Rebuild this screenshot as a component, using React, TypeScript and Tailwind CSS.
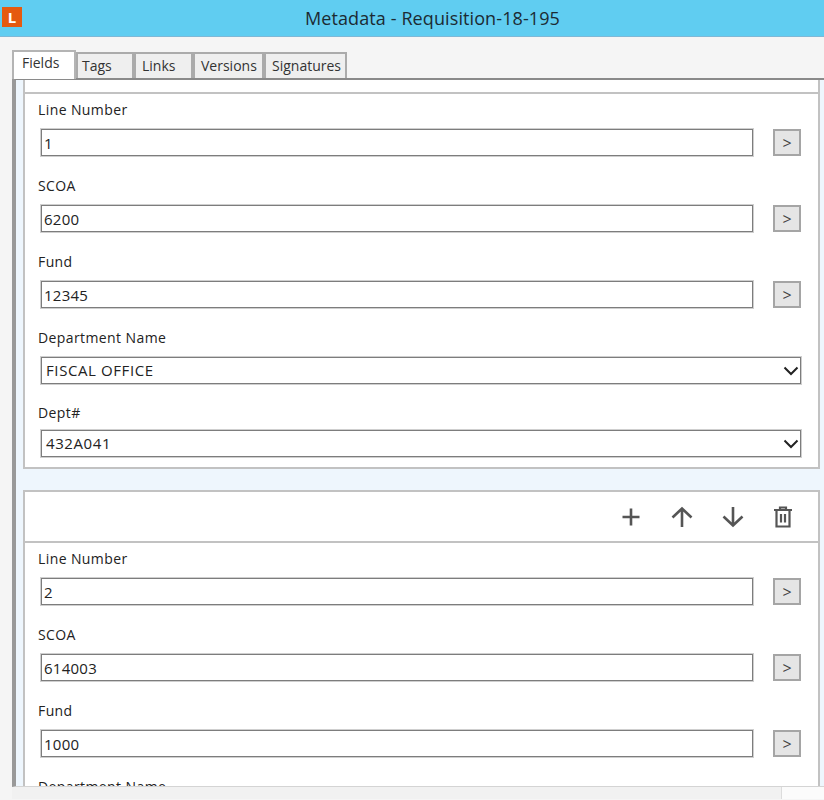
const font = "font-['Open_Sans',sans-serif]";

const tabs = [
  { name: "Tags", cls: "w-[58px] pl-[4px]" },
  { name: "Links", cls: "w-[59px] pl-[6px]" },
  { name: "Versions", cls: "w-[71px] pl-[6px]" },
  { name: "Signatures", cls: "w-[83px] pl-[6px]" },
];

const inputBox = "h-[27px] border border-[#7d7d7d] ring-1 ring-[#cfcfcf] bg-white";

const Label = ({ text, mb }: { text: string; mb: string }) => (
  <div className={`h-5 ${mb} pl-[13px] text-[14px] leading-5 tracking-[0.4px] text-[#222]`}>{text}</div>
);

const TextField = ({ label, value }: { label: string; value: string }) => (
  <div className="mb-[20px]">
    <Label text={label} mb="mb-[9px]" />
    <div className="flex items-center pl-[16px] pr-[17px]">
      <div className={`flex-1 ${inputBox} pl-[2px] text-[15px] leading-[26px] tracking-[0.25px] text-[#222]`}>
        {value}
      </div>
      <button className="ml-5 w-[28px] h-[27px] border-2 border-[#a5a5a5] bg-[#e5e5e5] text-[16px] leading-[20px] text-[#444]">
        &gt;
      </button>
    </div>
  </div>
);

const SelectField = ({ label, value, labelMb, mb }: { label: string; value: string; labelMb: string; mb: string }) => (
  <div className={mb}>
    <Label text={label} mb={labelMb} />
    <div className={`ml-[16px] mr-[17px] ${inputBox} pl-[4px] pr-[1px] flex items-center justify-between text-[15px] tracking-[0.6px] text-[#222]`}>
      <span>{value}</span>
      <svg width="16" height="10" viewBox="0 0 16 10" fill="none" stroke="#222" strokeWidth="2">
        <path d="M1.500 1.500 8 8l6.500-6.500" />
      </svg>
    </div>
  </div>
);

const TrashIcon = () => (
  <svg width="20" height="22" viewBox="0 0 20 22" fill="none" stroke="#555" strokeWidth="2.200">
    <path d="M1 4h18M7 4V1.500h6V4M3.500 4v16.500h13V4" />
    <path d="M8 8v8.500M12 8v8.500" />
  </svg>
);

const Toolbar = () => (
  <div className="h-[51px] flex items-center justify-end gap-[29px] pr-[25px] border-b-2 border-[#c2c2c2]">
    <svg width="22" height="22" viewBox="0 0 22 22" fill="none" stroke="#555" strokeWidth="2.600">
      <path d="M11 2.500v17M2.500 11h17" />
    </svg>
    <svg width="22" height="22" viewBox="0 0 22 22" fill="none" stroke="#555" strokeWidth="2.600">
      <path d="M11 21V2.500M1.500 11.500 11 2.500l9.500 9" />
    </svg>
    <svg width="22" height="22" viewBox="0 0 22 22" fill="none" stroke="#555" strokeWidth="2.600">
      <path d="M11 1v18.500M1.500 10.500 11 19.500l9.500-9" />
    </svg>
    <TrashIcon />
  </div>
);

export default function App() {
  return (
    <div className={`w-[824px] h-[800px] overflow-hidden flex flex-col bg-[#f5f5f5] ${font}`}>
      <div className="relative h-[37px] shrink-0 bg-[#60cdf1] border-b border-[#7fb8d6] flex items-center justify-center pl-[41px] text-[18px] tracking-[0.1px] text-[#1c2b33]">
        <div className="absolute left-[2px] top-[7px] w-[20px] h-[20px] bg-[#e55a10] text-white text-[15px] leading-[20px] font-bold text-center">
          L
        </div>
        Metadata - Requisition-18-195
      </div>

      <div className="h-[41px] shrink-0 pl-[12px] flex items-end text-[14px] text-[#333]">
        <div className="w-[64px] h-[29px] -mb-[1px] relative border-2 border-b-0 border-[#b4b4b4] bg-white pl-[8px] leading-[22px]">
          Fields
        </div>
        {tabs.map((t) => (
          <div
            key={t.name}
            className={`${t.cls} h-[26px] border-2 border-b-0 border-[#ababab] bg-[#efefef] leading-[24px]`}
          >
            {t.name}
          </div>
        ))}
      </div>

      <div className="h-[709px] shrink-0 ml-[12px] border-t-2 border-t-[#8a8a8a] border-l-4 border-l-[#999999] border-b border-b-[#d4d4d4] bg-[#eef6fd] pl-[7px] pr-[4px] overflow-hidden">
        <div className="border-2 border-t-0 border-[#c2c2c2] bg-white">
          <div className="h-[14px] border-b-2 border-[#c2c2c2]" />
          <div className="pt-[6px]">
            <TextField label="Line Number" value="1" />
            <TextField label="SCOA" value="6200" />
            <TextField label="Fund" value="12345" />
            <SelectField label="Department Name" value="FISCAL OFFICE" labelMb="mb-[9px]" mb="mb-[19px]" />
            <SelectField label="Dept#" value="432A041" labelMb="mb-[7px]" mb="mb-[10px]" />
          </div>
        </div>

        <div className="mt-[21px] border-2 border-[#c2c2c2] bg-white">
          <Toolbar />
          <div className="pt-[6px]">
            <TextField label="Line Number" value="2" />
            <TextField label="SCOA" value="614003" />
            <TextField label="Fund" value="1000" />
            <SelectField label="Department Name" value="" labelMb="mb-[9px]" mb="mb-[19px]" />
          </div>
        </div>
      </div>

      <div className="h-[12px] flex bg-[#fbfbfb]">
        <div className="w-[12px] bg-[#f5f5f5]" />
        <div className="w-[770px] bg-[#f1f1f1] border-r border-[#dcdcdc]" />
      </div>
    </div>
  );
}
